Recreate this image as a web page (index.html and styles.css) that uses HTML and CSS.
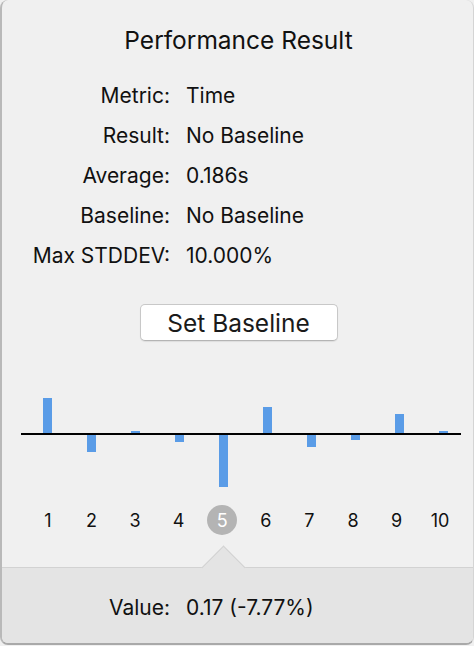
FILE: index.html
```html
<!DOCTYPE html>
<html>
<head>
<meta charset="utf-8">
<link rel="stylesheet" href="styles.css">
</head>
<body>
<div class="popover">
  <div class="title">Performance Result</div>
  <div class="info">
    <div class="label">Metric:</div><div class="value">Time</div>
    <div class="label">Result:</div><div class="value">No Baseline</div>
    <div class="label">Average:</div><div class="value">0.186s</div>
    <div class="label">Baseline:</div><div class="value">No Baseline</div>
    <div class="label">Max STDDEV:</div><div class="value">10.000%</div>
  </div>
  <div class="btn-row"><button class="btn">Set Baseline</button></div>
  <div class="chart">
    <div class="bars up">
      <div class="col"><div class="bar" style="height:35px"></div></div>
      <div class="col"></div>
      <div class="col"><div class="bar" style="height:2px"></div></div>
      <div class="col"></div>
      <div class="col"></div>
      <div class="col"><div class="bar" style="height:26px"></div></div>
      <div class="col"></div>
      <div class="col"></div>
      <div class="col"><div class="bar" style="height:19px"></div></div>
      <div class="col"><div class="bar" style="height:2px"></div></div>
    </div>
    <div class="axis"></div>
    <div class="bars down">
      <div class="col"></div>
      <div class="col"><div class="bar" style="height:17px"></div></div>
      <div class="col"></div>
      <div class="col"><div class="bar" style="height:7px"></div></div>
      <div class="col"><div class="bar" style="height:52px"></div></div>
      <div class="col"></div>
      <div class="col"><div class="bar" style="height:12px"></div></div>
      <div class="col"><div class="bar" style="height:5px"></div></div>
      <div class="col"></div>
      <div class="col"></div>
    </div>
    <div class="nums">
      <div class="num">1</div>
      <div class="num">2</div>
      <div class="num">3</div>
      <div class="num">4</div>
      <div class="num"><span class="sel">5</span></div>
      <div class="num">6</div>
      <div class="num">7</div>
      <div class="num">8</div>
      <div class="num">9</div>
      <div class="num">10</div>
    </div>
  </div>
  <div class="detail">
    <div class="info detail-info">
      <div class="label">Value:</div><div class="value">0.17 (-7.77%)</div>
    </div>
  </div>
</div>
</body>
</html>
```

FILE: styles.css
```css
html, body {
  margin: 0;
  padding: 0;
  background: #f0f0f0;
}
body {
  width: 474px;
  height: 646px;
  overflow: hidden;
  font-family: "Inter", "Liberation Sans", sans-serif;
  color: #111;
}
.popover {
  box-sizing: border-box;
  width: 474px;
  height: 645px;
  background: #f0f0f0;
  border-left: 2px solid #b9b9b9;
  border-right: 1px solid #d4d4d4;
  border-bottom: 2px solid #a9a9a9;
  border-radius: 8px;
  overflow: hidden;
  display: flex;
  flex-direction: column;
}
.title {
  margin-top: 25px;
  line-height: 30px;
  font-size: 24.5px;
  text-align: center;
  padding-left: 2px;
}
.info {
  margin-top: 21px;
  display: grid;
  grid-template-columns: 168px auto;
  column-gap: 16px;
  font-size: 21px;
}
.label, .value {
  line-height: 40px;
}
.label {
  text-align: right;
}
.btn-row {
  margin-top: 28px;
  display: flex;
  justify-content: center;
  padding-left: 2px;
}
.btn {
  box-sizing: border-box;
  width: 198px;
  height: 37px;
  background: #fff;
  border: 1px solid #c8c8c8;
  border-bottom-color: #b4b4b4;
  border-radius: 5px;
  box-shadow: 0 1px 1px rgba(0,0,0,0.08);
  font-family: inherit;
  font-size: 24.5px;
  color: #1a1a1a;
  padding: 0;
}
.chart {
  margin-top: 57px;
  display: flex;
  flex-direction: column;
}
.bars {
  display: flex;
  padding-left: 23px;
}
.bars.up {
  height: 35px;
  align-items: flex-end;
}
.bars.down {
  height: 52px;
  align-items: flex-start;
}
.col {
  width: 44px;
  display: flex;
  justify-content: center;
}
.bar {
  width: 9px;
  background: #5a9ce7;
}
.axis {
  height: 2px;
  background: #000;
  margin-left: 19px;
  width: 440px;
}
.nums {
  margin-top: 18px;
  display: flex;
  padding-left: 24px;
  height: 30px;
  align-items: center;
}
.num {
  width: 43.6px;
  text-align: center;
  font-size: 18px;
  display: flex;
  justify-content: center;
  align-items: center;
}
.sel {
  width: 30px;
  height: 30px;
  border-radius: 50%;
  background: #b4b4b4;
  color: #fff;
  display: flex;
  align-items: center;
  justify-content: center;
}
.detail {
  margin-top: 32px;
  flex: 1;
  background: #e4e4e4;
  border-top: 1px solid #d2d2d2;
  position: relative;
  padding-top: 28px;
}
.detail::before {
  content: "";
  position: absolute;
  left: 206px;
  top: -16px;
  width: 30px;
  height: 30px;
  background: #e4e4e4;
  border-left: 1px solid #d2d2d2;
  border-top: 1px solid #d2d2d2;
  transform: rotate(45deg);
}
.detail-info {
  margin-top: 0;
  position: relative;
}
.detail-info .label, .detail-info .value {
  line-height: 24px;
}
```
